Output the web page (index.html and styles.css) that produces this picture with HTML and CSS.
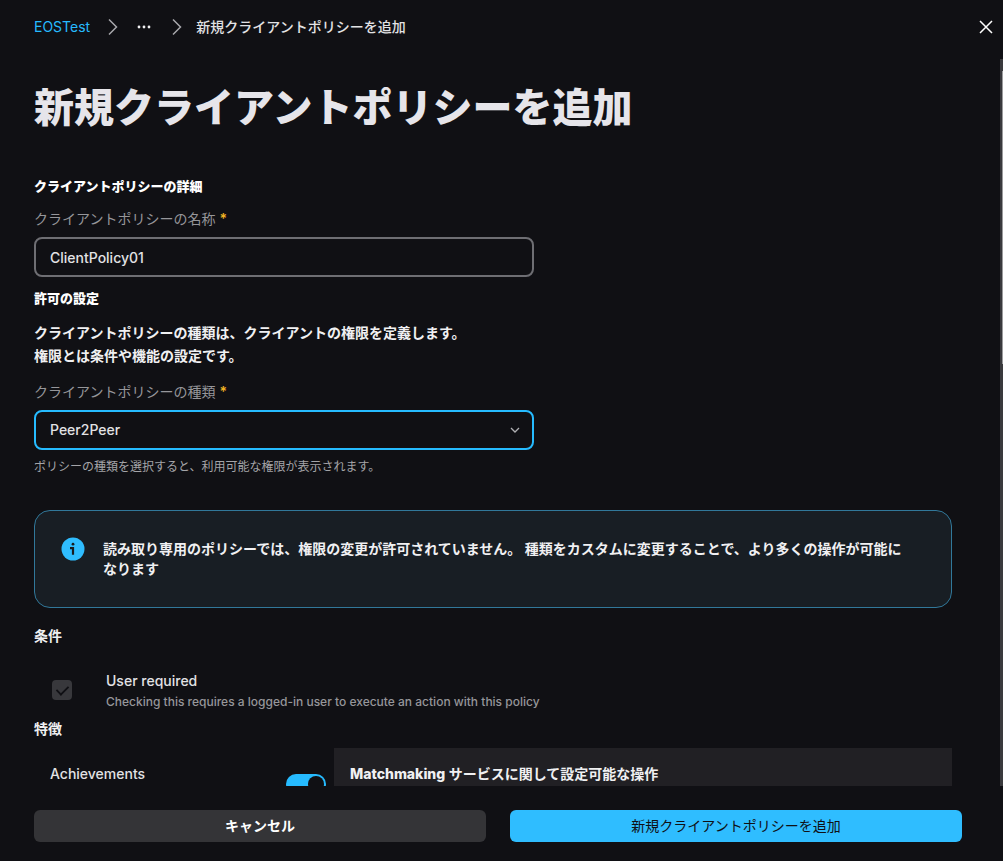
FILE: index.html
```html
<!DOCTYPE html>
<html lang="ja">
<head>
    <meta charset="UTF-8">
    <meta name="viewport" content="width=device-width, initial-scale=1.0">
    <title>新規クライアントポリシーを追加</title>
    <link rel="stylesheet" href="styles.css">
</head>
<body>

    <header class="top-bar">
        <nav class="breadcrumb" aria-label="breadcrumb">
            <a href="#" class="breadcrumb-link">EOSTest</a>
            <svg class="breadcrumb-arrow" viewBox="0 0 10 18"><path d="M1 1.5 8.5 9 1 16.5"/></svg>
            <button type="button" class="breadcrumb-more" aria-label="その他">
                <svg viewBox="0 0 14 4"><circle cx="2" cy="2" r="1.4"/><circle cx="7" cy="2" r="1.4"/><circle cx="12" cy="2" r="1.4"/></svg>
            </button>
            <svg class="breadcrumb-arrow" viewBox="0 0 10 18"><path d="M1 1.5 8.5 9 1 16.5"/></svg>
            <span class="breadcrumb-current">新規クライアントポリシーを追加</span>
        </nav>
        <button type="button" class="close-button" aria-label="閉じる">
            <svg viewBox="0 0 14 14"><path d="M1 1 13 13M13 1 1 13"/></svg>
        </button>
    </header>

    <div class="scroll-area">
        <main class="content">
            <h1>新規クライアントポリシーを追加</h1>

            <h2 class="section-title">クライアントポリシーの詳細</h2>
            <div class="field">
                <label for="policyName">クライアントポリシーの名称<span class="required">*</span></label>
                <input type="text" id="policyName" class="text-box" value="ClientPolicy01">
            </div>

            <h2 class="section-title">許可の設定</h2>
            <p class="description">クライアントポリシーの種類は、クライアントの権限を定義します。<br>権限とは条件や機能の設定です。</p>
            <div class="field">
                <label for="policyType">クライアントポリシーの種類<span class="required">*</span></label>
                <div class="select-wrap">
                    <select id="policyType" class="text-box active">
                        <option>Peer2Peer</option>
                    </select>
                    <svg class="select-arrow" viewBox="0 0 10 6"><path d="M1 1 5 5 9 1"/></svg>
                </div>
                <p class="hint">ポリシーの種類を選択すると、利用可能な権限が表示されます。</p>
            </div>

            <div class="notice">
                <svg class="notice-icon" viewBox="0 0 24 24">
                    <circle cx="12" cy="12" r="11.5" fill="#2fbdff"/>
                    <circle cx="12" cy="7.2" r="1.4" fill="#181c20"/>
                    <path d="M9 11.2H12V17.8" fill="none" stroke="#181c20" stroke-width="2.2"/>
                </svg>
                <p>読み取り専用のポリシーでは、権限の変更が許可されていません。 種類をカスタムに変更することで、より多くの操作が可能になります</p>
            </div>

            <h3>条件</h3>
            <div class="condition">
                <input type="checkbox" id="userRequired" class="check-box" checked disabled>
                <label for="userRequired">
                    <span class="condition-name">User required</span>
                    <span class="condition-text">Checking this requires a logged-in user to execute an action with this policy</span>
                </label>
            </div>

            <h3>特徴</h3>
            <div class="features">
                <div class="feature">
                    <label for="achievements">Achievements</label>
                    <input type="checkbox" id="achievements" class="toggle" checked>
                </div>
                <div class="feature-panel">
                    <strong>Matchmaking</strong> サービスに関して設定可能な操作
                </div>
            </div>
        </main>
        <div class="scroll-track"><div class="scroll-thumb"></div></div>
    </div>

    <footer class="actions">
        <button type="button" class="cancel-button">キャンセル</button>
        <button type="submit" class="submit-button">新規クライアントポリシーを追加</button>
    </footer>

</body>
</html>
```
FILE: styles.css
```css
* {
    box-sizing: border-box;
}
body {
    margin: 0;
    height: 100vh;
    display: flex;
    flex-direction: column;
    background-color: #101014;
    color: #f0f0f2;
    font-family: Inter, "Noto Sans CJK JP", sans-serif;
    font-size: 14px;
    line-height: 20px;
}
button, input, select {
    font: inherit;
}
button {
    cursor: pointer;
}
h1, h2, h3, p {
    margin: 0;
}

/* top bar */
.top-bar {
    display: flex;
    align-items: center;
    justify-content: space-between;
    padding: 17px 10px 22px 34px;
}
.breadcrumb {
    display: flex;
    align-items: center;
    gap: 14px;
}
.breadcrumb-link {
    padding-right: 4px;
    color: #26bbff;
    text-decoration: none;
}
.breadcrumb-current {
    color: #e2e2e4;
    font-weight: 500;
}
.breadcrumb-arrow {
    width: 10px;
    height: 18px;
    fill: none;
    stroke: #a8a8ac;
    stroke-width: 1.5;
}
.breadcrumb-more {
    display: flex;
    padding: 0 7px 0 5px;
    border: none;
    background: none;
}
.breadcrumb-more svg {
    width: 14px;
    height: 4px;
    fill: #f0f0f2;
}
.close-button {
    display: flex;
    padding: 0;
    border: none;
    background: none;
}
.close-button svg {
    width: 14px;
    height: 14px;
    fill: none;
    stroke: #ffffff;
    stroke-width: 1.5;
}

/* scrolling part */
.scroll-area {
    flex: 1;
    min-height: 0;
    display: flex;
}
.content {
    flex: 1;
    overflow-y: auto;
    scrollbar-width: none;
    padding: 25px 48px 0 34px;
}
.scroll-track {
    width: 3px;
    padding: 12px 0 0 2px;
    background-color: #3a3a3d;
}
.scroll-thumb {
    height: 41%;
    background-color: #9b9b9d;
}
h1 {
    margin-bottom: 44px;
    color: #e6e5ea;
    font-size: 40px;
    line-height: 48px;
    font-weight: 900;
}
h3 {
    font-size: 14px;
    font-weight: 600;
}
.section-title {
    font-size: 13px;
    line-height: 20px;
    font-weight: 800;
    color: #ffffff;
}
.description {
    margin: 13px 0 15px;
    line-height: 23px;
    font-weight: 600;
}
.field {
    max-width: 500px;
    margin: 13px 0 11px;
}
.field label {
    display: block;
    margin-bottom: 8px;
    color: #96969a;
}
.required {
    margin-left: 4px;
    color: #f0b323;
    font-weight: 600;
}
.text-box {
    display: block;
    width: 100%;
    height: 40px;
    padding: 0 14px;
    border: 2px solid #6e6e73;
    border-radius: 8px;
    background-color: #101014;
    color: #e2e2e4;
    font-weight: 500;
    appearance: none;
    outline: none;
}
.text-box.active {
    border-color: #26bbff;
}
.select-wrap {
    position: relative;
}
.select-arrow {
    position: absolute;
    right: 14px;
    top: 17px;
    width: 10px;
    height: 6px;
    fill: none;
    stroke: #b0b0b3;
    stroke-width: 1.3;
    pointer-events: none;
}
.hint {
    margin-top: 7px;
    color: #a4a4a8;
    font-size: 12px;
}

/* read-only notice */
.notice {
    display: flex;
    gap: 18px;
    margin: 33px 0 18px;
    padding: 28px 38px 28px 26px;
    border: 1px solid #31789a;
    border-radius: 16px;
    background-color: #181e24;
    font-weight: 600;
}
.notice-icon {
    flex: none;
    width: 24px;
    height: 24px;
    margin-top: -2px;
}

/* conditions */
.condition {
    display: flex;
    align-items: flex-start;
    gap: 34px;
    padding: 25px 18px 7px;
}
.condition span {
    display: block;
}
.condition-name {
    color: #e2e2e4;
    font-weight: 500;
}
.condition-text {
    margin-top: 1px;
    color: #96969a;
    font-size: 12px;
    font-weight: 500;
}
.check-box {
    flex: none;
    display: grid;
    place-items: center;
    width: 20px;
    height: 20px;
    margin: 9px 0 0;
    border-radius: 4px;
    background-color: #38383c;
    appearance: none;
}
.check-box:checked::before {
    content: "";
    width: 11px;
    height: 6px;
    margin-bottom: 3px;
    border: solid #101014;
    border-width: 0 0 2px 2px;
    rotate: -45deg;
    scale: 0.9;
}

/* features */
.features {
    display: flex;
    margin-top: 9px;
}
.feature {
    display: flex;
    align-items: flex-start;
    justify-content: space-between;
    width: 300px;
    padding: 16px 8px 0 16px;
    color: #e2e2e4;
    font-weight: 500;
}
.toggle {
    width: 40px;
    height: 20px;
    margin: 10px 0 0;
    padding: 2px;
    border-radius: 10px;
    background-color: #26bbff;
    appearance: none;
}
.toggle::before {
    content: "";
    display: block;
    width: 16px;
    height: 16px;
    border-radius: 50%;
    background-color: #101014;
}
.toggle:checked::before {
    margin-left: auto;
}
.feature-panel {
    flex: 1;
    padding: 16px;
    background-color: #212024;
    font-weight: 600;
}
.feature-panel strong {
    font-weight: 800;
}

/* bottom buttons */
.actions {
    display: flex;
    gap: 24px;
    padding: 24px 41px 19px 34px;
}
.actions button {
    flex: 1;
    height: 32px;
    border: none;
    border-radius: 6px;
}
.actions .cancel-button {
    background-color: #343437;
    color: #ffffff;
    font-weight: 600;
}
.actions .submit-button {
    background-color: #2fbdff;
    color: #101014;
}
```
